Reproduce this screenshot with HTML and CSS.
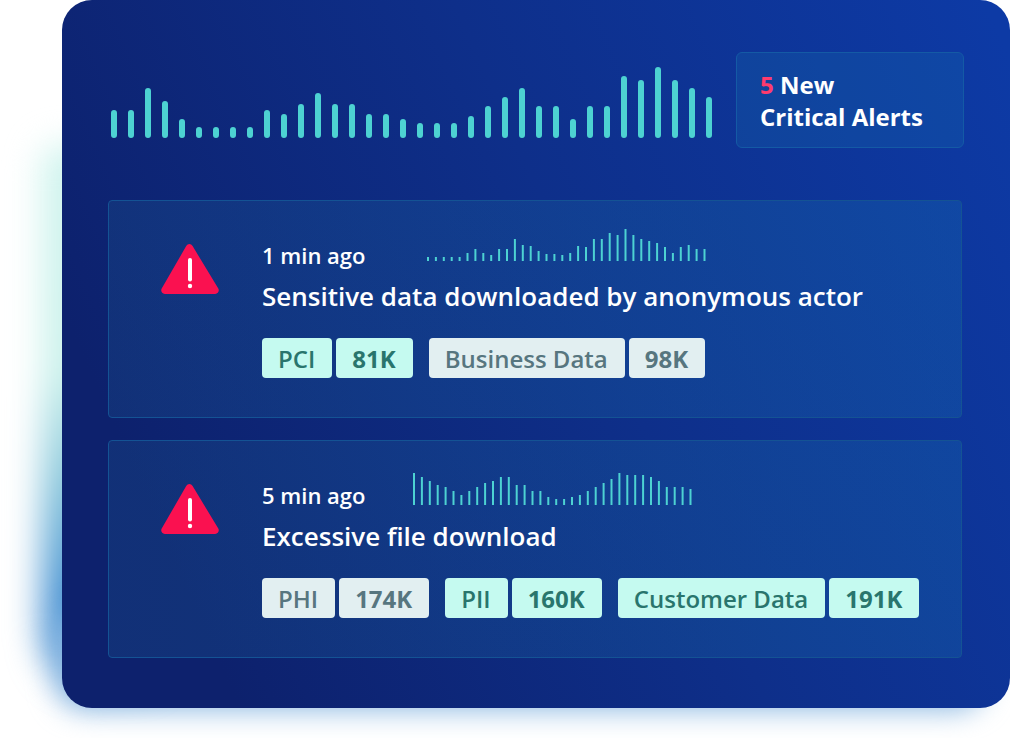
FILE: index.html
```html
<!DOCTYPE html>
<html lang="en">
<head>
<meta charset="utf-8">
<title>Critical Alerts</title>
<link rel="stylesheet" href="styles.css">
</head>
<body>
<main class="stage">
  <section class="panel">
    <header class="summary">
      <svg class="activity" viewBox="0 0 601 71" aria-hidden="true">
        <path d="M3 68v-22m17 22v-22m17 22v-44m17 44v-31m17 31v-13m17 13v-5m17 5v-5m17 5v-5m17 5v-5m17 5v-22m17 22v-18m17 18v-28m17 28v-39m17 39v-28m17 28v-28m17 28v-18m17 18v-18m17 18v-13m17 13v-9m17 9v-9m17 9v-9m17 9v-16m17 16v-26m17 26v-35m17 35v-44m17 44v-26m17 26v-26m17 26v-13m17 13v-26m17 26v-26m17 26v-56m17 56v-52m17 52v-65m17 65v-52m17 52v-44m17 44v-35"/>
      </svg>
      <h1 class="count"><span class="count-number">5</span> New<br>Critical Alerts</h1>
    </header>

    <article class="alert">
      <svg class="alert-icon" viewBox="0 0 58 50" aria-hidden="true">
        <path class="triangle" d="M25.2 2.1C26.8-.6 30-.6 31.600 2.100L57.300 44.500C58.700 46.900 57 50 54.200 50H3.800C1 50-.7 46.900.7 44.500Z"/>
        <path class="mark" d="M29 16V35.500"/>
        <circle class="dot" cx="29" cy="42" r="2.200"/>
      </svg>
      <div class="alert-body">
        <div class="alert-meta">
          <time class="time">1 min ago</time>
          <svg class="spark spark-far" viewBox="0 0 279 32" aria-hidden="true">
            <path d="M1 32v-4m7.900 4v-4m7.900 4v-4m7.900 4v-4m7.900 4v-4m7.900 4v-8m7.900 8v-12m7.900 12v-8m7.900 8v-6m7.900 6v-12m7.900 12v-12m7.900 12v-22m7.900 22v-16m7.900 16v-15m7.900 15v-10m7.900 10v-7m7.900 7v-7m7.900 7v-6m7.900 6v-8m7.900 8v-15m7.900 15v-14m7.900 14v-22m7.900 22v-22m7.900 22v-28m7.900 28v-26m7.900 26v-32m7.900 32v-26m7.900 26v-22m7.900 22v-20m7.900 20v-18m7.900 18v-14m7.900 14v-8m7.900 8v-14m7.900 14v-16m7.900 16v-12m7.900 12v-12"/>
          </svg>
        </div>
        <h2 class="title">Sensitive data downloaded by anonymous actor</h2>
        <div class="tags">
          <div class="tag tag-mint"><span class="name">PCI</span><strong class="value">81K</strong></div>
          <div class="tag tag-grey"><span class="name">Business Data</span><strong class="value">98K</strong></div>
        </div>
      </div>
    </article>

    <article class="alert">
      <svg class="alert-icon" viewBox="0 0 58 50" aria-hidden="true">
        <path class="triangle" d="M25.2 2.1C26.8-.6 30-.6 31.600 2.100L57.300 44.500C58.700 46.900 57 50 54.200 50H3.800C1 50-.7 46.900.7 44.500Z"/>
        <path class="mark" d="M29 16V35.500"/>
        <circle class="dot" cx="29" cy="42" r="2.200"/>
      </svg>
      <div class="alert-body">
        <div class="alert-meta">
          <time class="time">5 min ago</time>
          <svg class="spark spark-low" viewBox="0 0 279 32" aria-hidden="true">
            <path d="M1 32v-32m7.900 32v-28m7.900 28v-24m7.900 24v-20m7.900 20v-18m7.900 18v-14m7.900 14v-10m7.900 10v-14m7.900 14v-18m7.900 18v-22m7.900 22v-24m7.900 24v-28m7.900 28v-28m7.900 28v-20m7.900 20v-20m7.900 20v-14m7.900 14v-14m7.900 14v-8m7.900 8v-6m7.900 6v-6m7.900 6v-8m7.900 8v-10m7.900 10v-14m7.900 14v-18m7.900 18v-22m7.900 22v-26m7.900 26v-32m7.900 32v-30m7.900 30v-30m7.900 30v-30m7.900 30v-28m7.900 28v-24m7.900 24v-18m7.900 18v-18m7.900 18v-18m7.900 18v-16"/>
          </svg>
        </div>
        <h2 class="title">Excessive file download</h2>
        <div class="tags">
          <div class="tag tag-grey"><span class="name">PHI</span><strong class="value">174K</strong></div>
          <div class="tag tag-mint"><span class="name">PII</span><strong class="value">160K</strong></div>
          <div class="tag tag-mint"><span class="name">Customer Data</span><strong class="value">191K</strong></div>
        </div>
      </div>
    </article>
  </section>
</main>
</body>
</html>
```

FILE: styles.css
```css
* {
  box-sizing: border-box;
}

body {
  margin: 0;
  background: #fff;
  color: #fff;
  font-family: "Open Sans", "Noto Sans", sans-serif;
}

h1,
h2 {
  margin: 0;
}

.stage {
  position: relative;
  isolation: isolate;
  overflow: hidden;
  padding: 0 0 30px 62px;
}

/* Coloured glow behind the panel's left and bottom edges */
.stage::before,
.stage::after {
  content: "";
  position: absolute;
  z-index: -1;
}

.stage::before {
  left: 42px;
  top: 145px;
  bottom: 54px;
  width: 120px;
  border-radius: 20px 20px 30px 50px;
  background: linear-gradient(#d0f4ee 0%, #ccf2ec 42%, #8cc8dc 62%, #4590d2 85%, #5c9dd8 100%);
  filter: blur(17px);
}

.stage::after {
  left: 56px;
  right: 24px;
  bottom: 28px;
  height: 100px;
  border-radius: 30px;
  background: #8ab7e1;
  filter: blur(14px);
}

.panel {
  display: flex;
  flex-direction: column;
  gap: 22px;
  padding: 52px 48px 50px 46px;
  border-radius: 30px;
  background: linear-gradient(66deg, #0d216d 14%, #0e2f8a 56%, #0d3aa5 98%);
}

.summary {
  display: flex;
  align-items: center;
  justify-content: space-between;
  gap: 24px;
  margin: 0 -2px 30px 3px;
}

.activity {
  flex: 0 1 601px;
  min-width: 0;
  margin-top: 4px;
  fill: none;
  stroke: #4dd2d2;
  stroke-width: 6;
  stroke-linecap: round;
}

.count {
  flex: 0 0 228px;
  padding: 16px 23px 14px;
  border: 1px solid #145aa5;
  border-radius: 6px;
  background: rgba(24, 118, 176, 0.24);
  font-size: 24px;
  font-weight: 700;
  line-height: 32px;
}

.count-number {
  color: #ff3b6d;
}

.alert {
  display: flex;
  gap: 43px;
  padding: 28px 32px 39px 52px;
  border: 1px solid #145394;
  border-radius: 4px;
  background: linear-gradient(90deg, rgba(36, 110, 160, 0.2), rgba(24, 118, 176, 0.26));
}

.alert-icon {
  flex: none;
  width: 58px;
  height: 50px;
  margin-top: 15px;
}

.triangle {
  fill: #fa1150;
}

.mark {
  stroke: #fff;
  stroke-width: 4;
  stroke-linecap: round;
}

.dot {
  fill: #fff;
}

.alert-body {
  flex: 1;
  min-width: 0;
}

.alert-meta {
  display: flex;
  align-items: flex-start;
  gap: 47px;
}

.time {
  padding-top: 11px;
  font-size: 22px;
  font-weight: 600;
  line-height: 30px;
}

.spark {
  width: 279px;
  height: 32px;
  fill: none;
  stroke: #4dd2d2;
  stroke-width: 2;
}

.spark-far {
  margin-left: 14px;
}

.spark-low {
  margin-top: 4px;
}

.title {
  margin-top: 8px;
  font-size: 26px;
  font-weight: 600;
  line-height: 36px;
}

.tags {
  display: flex;
  flex-wrap: wrap;
  gap: 16px;
  margin-top: 24px;
}

.tag {
  display: flex;
  gap: 4px;
  font-size: 24px;
  line-height: 38px;
  white-space: nowrap;
}

.name,
.value {
  padding: 2px 17px 0 16px;
  border-radius: 4px;
}

.name {
  font-weight: 600;
}

.value {
  font-weight: 700;
}

.tag-mint .name,
.tag-mint .value {
  background: #c5faf0;
  color: #29756d;
}

.tag-grey .name,
.tag-grey .value {
  background: #e2eff1;
  color: #57767f;
}
```
